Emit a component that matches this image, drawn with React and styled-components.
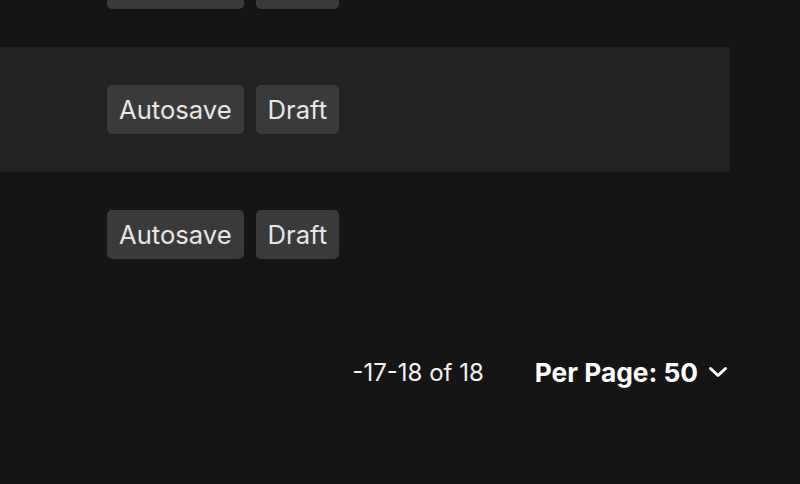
import styled, { createGlobalStyle } from "styled-components";

const GlobalStyle = createGlobalStyle`
  html, body {
    margin: 0;
    padding: 0;
    background: #151515;
    overflow: hidden;
  }
  body {
    font-family: Inter, "Liberation Sans", sans-serif;
    color: #e8e8e8;
  }
`;

const Page = styled.div`
  width: 800px;
  height: 484px;
  padding-right: 72px;
  box-sizing: border-box;
  background: #151515;
  overflow: hidden;
`;

// list is scrolled: the first row is partly above the viewport
const RowsList = styled.ul`
  list-style: none;
  margin: -78px -2px 0 0;
  padding: 0;
`;

const Row = styled.li`
  display: flex;
  align-items: center;
  gap: 12px;
  height: 125px;
  padding-left: 107px;
  background: ${({ $highlight }) => ($highlight ? "#222222" : "transparent")};
`;

const Tag = styled.span`
  display: inline-flex;
  align-items: center;
  height: 49px;
  padding: 0 12px;
  border-radius: 5px;
  background: #3a3a3a;
  color: #e6e6e6;
  font-size: 25.6px;
`;

const Footer = styled.div`
  display: flex;
  justify-content: flex-end;
  align-items: center;
  gap: 51px;
  height: 150px;
`;

const RangeText = styled.span`
  font-size: 24px;
  color: #f2f2f2;
`;

const PerPageButton = styled.button`
  display: flex;
  align-items: center;
  gap: 10px;
  padding: 0;
  border: 0;
  background: none;
  color: #ffffff;
  font-family: inherit;
  font-size: 26.3px;
  font-weight: 700;
  cursor: pointer;
`;

const rows = [
  { id: 1, tags: ["Autosave", "Draft"] },
  { id: 2, tags: ["Autosave", "Draft"], highlight: true },
  { id: 3, tags: ["Autosave", "Draft"] },
];

export default function App() {
  return (
    <Page>
      <GlobalStyle />
      <RowsList>
        {rows.map(({ id, tags, highlight }) => (
          <Row key={id} $highlight={highlight}>
            {tags.map((tag) => (
              <Tag key={tag}>{tag}</Tag>
            ))}
          </Row>
        ))}
      </RowsList>
      <Footer>
        <RangeText>-17-18 of 18</RangeText>
        <PerPageButton>
          Per Page: 50
          <svg width="20" height="14" viewBox="0 0 20 14" fill="none">
            <path
              d="M2.5 3.5 L10 10.5 L17.5 3.5"
              stroke="#ffffff"
              strokeWidth="3"
              strokeLinecap="round"
              strokeLinejoin="round"
            />
          </svg>
        </PerPageButton>
      </Footer>
    </Page>
  );
}
